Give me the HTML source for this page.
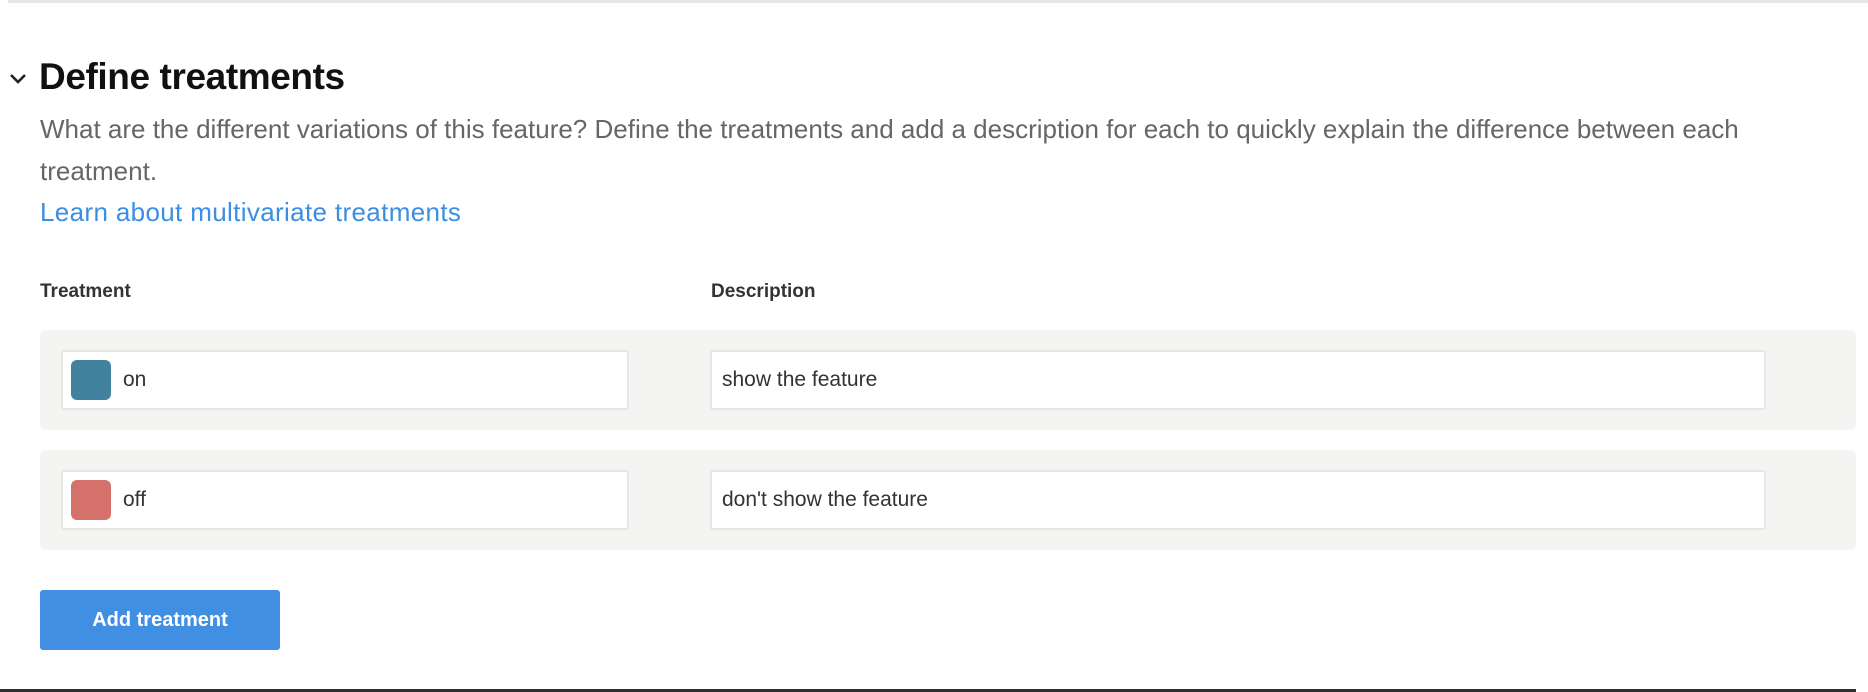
<!DOCTYPE html>
<html><head><meta charset="utf-8"><style>
*{margin:0;padding:0;box-sizing:border-box}
body{width:1868px;height:692px;background:#fff;position:relative;overflow:hidden;font-family:"Liberation Sans",sans-serif}
.abs{position:absolute}
.topline{left:8px;top:0;width:1860px;height:3px;background:#e6e6e6}
.title{left:39px;top:56px;font-size:37px;font-weight:bold;color:#111;white-space:nowrap;letter-spacing:-0.4px}
.desc{left:40px;top:108px;width:1790px;font-size:26px;line-height:42px;color:#666}
.link{left:40px;top:197px;font-size:26px;color:#3b8ee3;letter-spacing:0.35px}
.hdr{top:281px;font-size:19px;font-weight:bold;color:#333}
.row{left:40px;width:1816px;height:100px;background:#f4f4f3;border-radius:6px}
.inp{height:60px;background:#fff;border:2px solid #e6e6e6;border-radius:3px}
.sw{left:8px;top:8px;width:40px;height:40px;border-radius:6px}
.txt{font-size:21px;color:#333;top:16px}
.btn{left:40px;top:590px;width:240px;height:60px;background:#418fe3;border-radius:3px;color:#fff;font-size:20px;font-weight:bold;text-align:center;line-height:60px}
.bottom{left:0;top:689px;width:1856px;height:3px;background:#2e2e2e}
</style></head><body>
<div class="abs topline"></div>
<svg class="abs" style="left:8px;top:72px" width="20" height="14" viewBox="0 0 20 14"><path d="M3 3 L10 10 L17 3" fill="none" stroke="#222" stroke-width="2.6"/></svg>
<div class="abs title">Define treatments</div>
<div class="abs desc">What are the different variations of this feature? Define the treatments and add a description for each to quickly explain the difference between each treatment.</div>
<div class="abs link">Learn about multivariate treatments</div>
<div class="abs hdr" style="left:40px">Treatment</div>
<div class="abs hdr" style="left:711px">Description</div>

<div class="abs row" style="top:330px"></div>
<div class="abs inp" style="left:61px;top:350px;width:568px"><div class="abs sw" style="background:#41839f"></div><div class="abs txt" style="left:60px">on</div></div>
<div class="abs inp" style="left:710px;top:350px;width:1056px"><div class="abs txt" style="left:10px">show the feature</div></div>

<div class="abs row" style="top:450px"></div>
<div class="abs inp" style="left:61px;top:470px;width:568px"><div class="abs sw" style="background:#d4716b"></div><div class="abs txt" style="left:60px">off</div></div>
<div class="abs inp" style="left:710px;top:470px;width:1056px"><div class="abs txt" style="left:10px">don't show the feature</div></div>

<div class="abs btn">Add treatment</div>
<div class="abs bottom"></div>
</body></html>
